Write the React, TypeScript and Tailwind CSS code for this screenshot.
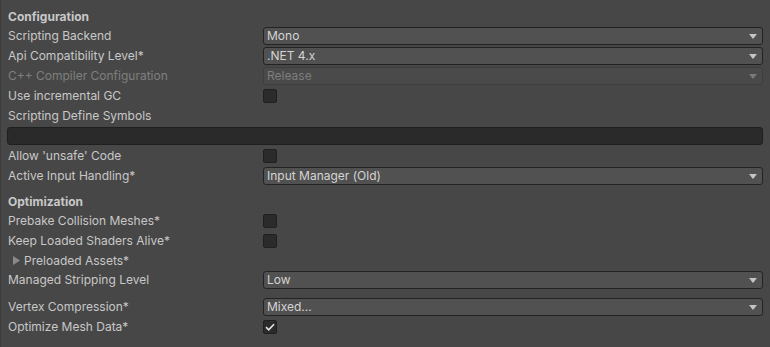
import type { ReactNode } from "react";

const font = { fontFamily: "Inter, 'Noto Sans', sans-serif" };

function Arrow({ dim = false }: { dim?: boolean }) {
  return (
    <svg width="8" height="5" viewBox="0 0 8 5" className="shrink-0">
      <path d="M0 0 H8 L4 5 Z" fill={dim ? "#7a7a7a" : "#c4c4c4"} />
    </svg>
  );
}

function Dropdown({ value, disabled = false }: { value: string; disabled?: boolean }) {
  return (
    <div
      className={
        disabled
          ? "flex-1 h-[18px] flex items-center justify-between pl-[3px] pr-[5px] rounded-[3px] border border-[#3e3e3e] bg-[#4a4a4a] text-[#7d7d7d]"
          : "flex-1 h-[18px] flex items-center justify-between pl-[3px] pr-[5px] rounded-[3px] border border-[#232323] bg-[#515151] text-[#d4d4d4]"
      }
    >
      <span className="leading-none">{value}</span>
      <Arrow dim={disabled} />
    </div>
  );
}

function Checkbox({ checked = false }: { checked?: boolean }) {
  return (
    <div className="w-[14px] h-[14px] rounded-[2px] border border-[#202020] bg-[#2b2b2b] flex items-center justify-center">
      {checked ? (
        <svg width="10" height="8" viewBox="0 0 10 8">
          <path d="M1 4.2 L3.7 6.8 L9 1.2" stroke="#e4e4e4" strokeWidth="1.6" fill="none" />
        </svg>
      ) : null}
    </div>
  );
}

function Row({
  label,
  disabled = false,
  short = false,
  children,
}: {
  label: ReactNode;
  disabled?: boolean;
  short?: boolean;
  children?: ReactNode;
}) {
  return (
    <div className={(short ? "h-[19px]" : "h-5") + " flex items-center"}>
      <div className={"w-[255px] shrink-0 " + (disabled ? "text-[#7f7f7f]" : "text-[#c8c8c8]")}>{label}</div>
      <div className="flex-1 flex items-center">{children}</div>
    </div>
  );
}

function Header({ children }: { children: ReactNode }) {
  return <div className="h-[18px] flex items-center font-bold text-[#c8c8c8]">{children}</div>;
}

export default function App() {
  return (
    <div
      className="w-[770px] h-[347px] bg-[#474747] border-l border-[#3c3c3c] pl-[7px] pr-[7px] pt-[8px] text-[12px] overflow-hidden"
      style={font}
    >
      <Header>Configuration</Header>
      <Row label="Scripting Backend">
        <Dropdown value="Mono" />
      </Row>
      <Row label="Api Compatibility Level*">
        <Dropdown value=".NET 4.x" />
      </Row>
      <Row label="C++ Compiler Configuration" disabled>
        <Dropdown value="Release" disabled />
      </Row>
      <Row label="Use incremental GC">
        <Checkbox />
      </Row>
      <Row label="Scripting Define Symbols" />
      <div className="h-5 pt-px">
        <div className="h-[18px] -ml-px rounded-[3px] border border-[#1f1f1f] bg-[#2a2a2a]" />
      </div>
      <Row label="Allow 'unsafe' Code">
        <Checkbox />
      </Row>
      <Row label="Active Input Handling*">
        <Dropdown value="Input Manager (Old)" />
      </Row>
      <div className="mt-[7px]">
        <Header>Optimization</Header>
      </div>
      <Row label="Prebake Collision Meshes*">
        <Checkbox />
      </Row>
      <Row label="Keep Loaded Shaders Alive*">
        <Checkbox />
      </Row>
      <Row
        short
        label={
          <span className="flex items-center gap-[4px] pl-[5px]">
            <svg width="7" height="9" viewBox="0 0 7 9">
              <path d="M0 0 L7 4.5 L0 9 Z" fill="#8a8a8a" />
            </svg>
            <span>Preloaded Assets*</span>
          </span>
        }
      />
      <Row label="Managed Stripping Level">
        <Dropdown value="Low" />
      </Row>
      <div className="h-[7px]" />
      <Row label="Vertex Compression*">
        <Dropdown value="Mixed..." />
      </Row>
      <Row label="Optimize Mesh Data*">
        <Checkbox checked />
      </Row>
    </div>
  );
}
